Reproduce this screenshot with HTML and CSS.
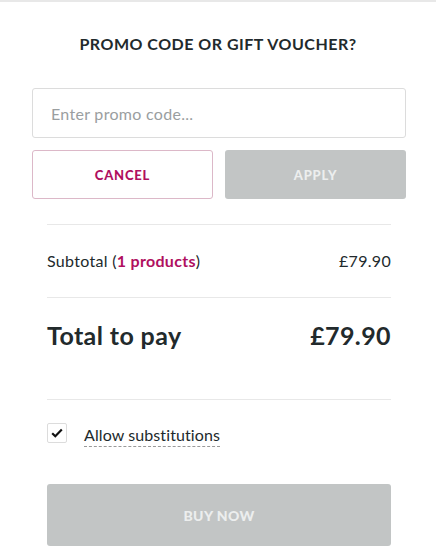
FILE: index.html
```html
<!DOCTYPE html>
<html lang="en">
<head>
<meta charset="utf-8">
<title>Promo code</title>
<link rel="stylesheet" href="styles.css">
</head>
<body>
<div class="panel">
  <h2 class="title">PROMO CODE OR GIFT VOUCHER?</h2>
  <div class="promo">
    <input class="promo-input" type="text" placeholder="Enter promo code...">
    <div class="actions">
      <button class="btn btn-outline">CANCEL</button>
      <button class="btn btn-disabled">APPLY</button>
    </div>
  </div>
  <div class="summary">
    <div class="row row-sub">
      <span>Subtotal (<strong class="accent">1 products</strong>)</span>
      <span>£79.90</span>
    </div>
    <div class="row row-total">
      <span>Total to pay</span>
      <span>£79.90</span>
    </div>
    <div class="subs">
      <span class="check">
        <svg width="12" height="10" viewBox="0 0 12 10"><path d="M1.2 5.2 L4.3 8.2 L10.8 1.6" fill="none" stroke="#111" stroke-width="2.2"/></svg>
      </span>
      <span class="subs-label">Allow substitutions</span>
    </div>
    <button class="btn btn-disabled btn-buy">BUY NOW</button>
  </div>
</div>
</body>
</html>
```

FILE: styles.css
```css
* { box-sizing: border-box; }
body {
  margin: 0;
  background: #fff;
  font-family: Lato, "Noto Sans", sans-serif;
  color: #222a2c;
}
.panel {
  border-top: 2px solid #e8e8e8;
  height: 557px;
}
.title {
  margin: 0;
  padding-top: 33px;
  font-size: 16px;
  line-height: 18px;
  font-weight: 700;
  text-align: center;
  letter-spacing: 0.5px;
  color: #222a2c;
}
.promo {
  padding: 0 30px 0 32px;
  margin-top: 35px;
}
.promo-input {
  display: block;
  width: 100%;
  height: 50px;
  border: 1px solid #dcdcdc;
  border-radius: 3px;
  padding: 0 18px;
  font-family: inherit;
  font-size: 16px;
  letter-spacing: 0.3px;
  color: #222;
  outline: none;
}
.promo-input::placeholder { color: #9a9ea0; }
.actions {
  display: grid;
  grid-template-columns: 1fr 1fr;
  gap: 12px;
  margin-top: 12px;
}
.btn {
  height: 49px;
  border-radius: 3px;
  font-family: inherit;
  font-size: 13px;
  font-weight: 900;
  letter-spacing: 0.8px;
  cursor: pointer;
}
.btn-outline {
  background: #fff;
  border: 1px solid #dcb8c8;
  color: #b0105f;
}
.btn-disabled {
  background: #c2c5c5;
  border: 0;
  color: #eceeee;
}
.summary {
  padding: 0 45px 0 47px;
  margin-top: 25px;
}
.row {
  display: flex;
  justify-content: space-between;
  align-items: center;
  border-top: 1px solid #e8e8e8;
}
.row-sub {
  height: 73px;
  padding-bottom: 2px;
  font-size: 16px;
  letter-spacing: 0.3px;
  color: #222a2c;
}
.accent { color: #b0105f; font-weight: 700; }
.row-total {
  height: 102px;
  font-size: 25px;
  font-weight: 700;
  letter-spacing: 0.4px;
  padding-bottom: 27px;
}
.subs {
  border-top: 1px solid #e8e8e8;
  display: flex;
  align-items: flex-start;
  gap: 17px;
  padding-top: 23px;
}
.check {
  width: 20px;
  height: 20px;
  border: 1px solid #dcdcdc;
  border-radius: 2px;
  display: flex;
  align-items: center;
  justify-content: center;
}
.subs-label {
  font-size: 16px;
  line-height: 20px;
  letter-spacing: 0.1px;
  border-bottom: 1px dashed #999;
  padding-bottom: 1px;
  margin-top: 2px;
}
.btn-buy {
  display: block;
  width: 100%;
  height: 62px;
  margin-top: 37px;
  font-size: 14px;
  letter-spacing: 0.4px;
}
```
